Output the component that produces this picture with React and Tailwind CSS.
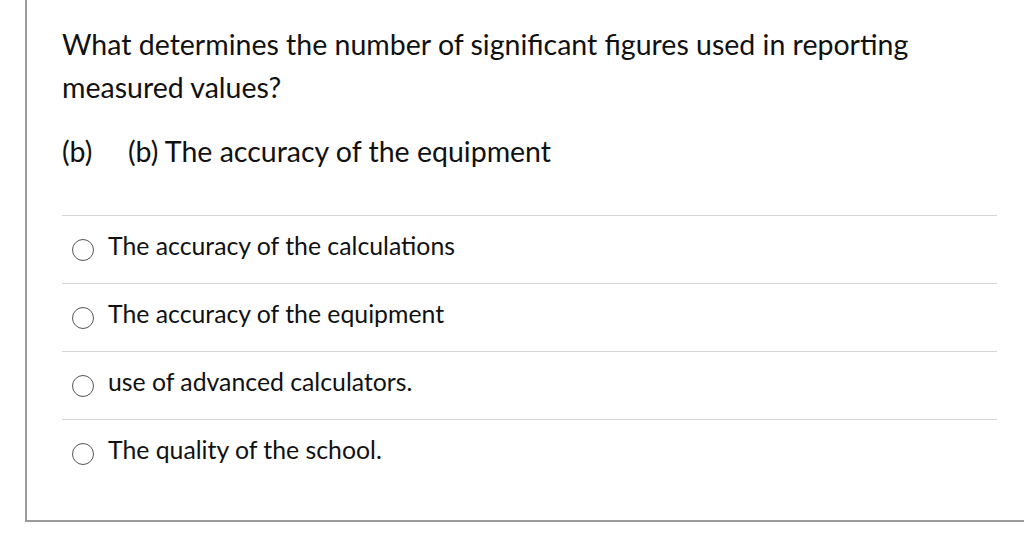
import React from "react";

const options = [
  "The accuracy of the calculations",
  "The accuracy of the equipment",
  "use of advanced calculators.",
  "The quality of the school.",
];

export default function App() {
  return (
    <div className="w-[1024px] h-[560px] bg-white" style={{ fontFamily: "Lato, 'Liberation Sans', sans-serif" }}>
      <div className="ml-[25px] h-[522px] border-l-2 border-b-2 border-[#9b9b9b] pl-[35px] pr-[27px] pt-[23px] text-[#111]">
        <p className="text-[28.5px] leading-[43px]">
          What determines the number of significant figures used in reporting measured values?
        </p>
        <div className="mt-[21px] flex text-[28.5px] leading-[43px]">
          <span className="w-[66px]">(b)</span>
          <span>(b) The accuracy of the equipment</span>
        </div>
        <div className="mt-[42px]">
          {options.map((o) => (
            <div key={o} className="h-[68px] border-t border-[#d4d4d4] flex items-center pl-[10px]">
              <span className="w-[22px] h-[22px] rounded-full border-[1.5px] border-[#555] shrink-0" />
              <span className="ml-[14px] pb-[8px] text-[24.8px] leading-[30px]">{o}</span>
            </div>
          ))}
        </div>
      </div>
    </div>
  );
}
